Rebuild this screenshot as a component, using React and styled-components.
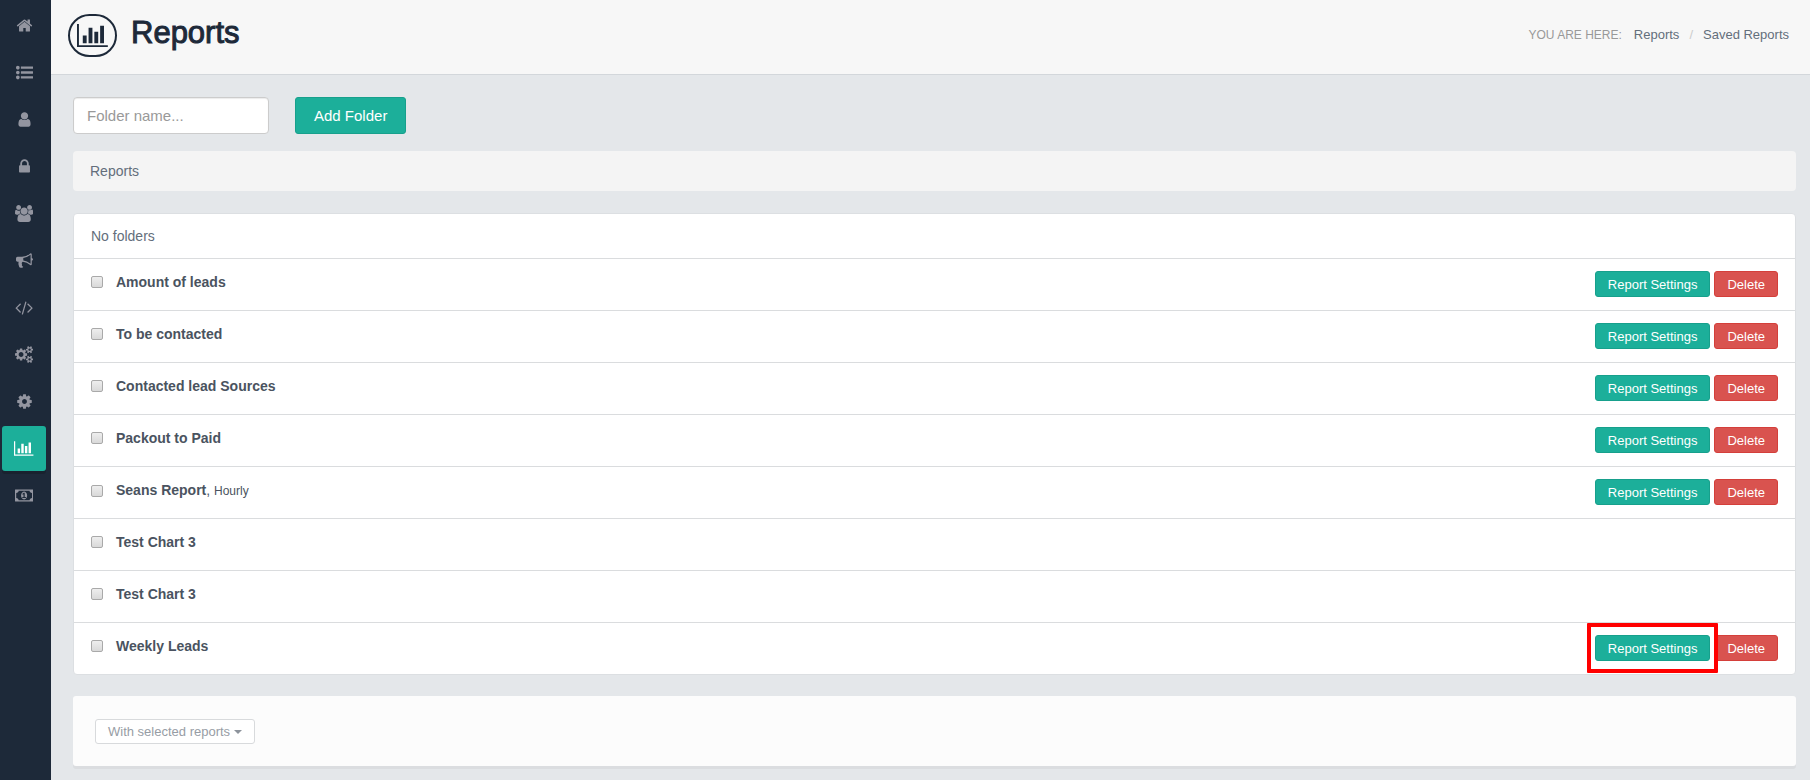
import { useState } from "react";
import styled, { createGlobalStyle } from "styled-components";

const GlobalStyle = createGlobalStyle`
  *, *::before, *::after {
    box-sizing: border-box;
  }
  body {
    margin: 0;
    background: #e4e7ea;
    color: #636e7b;
    font-family: "Liberation Sans", Arial, sans-serif;
    font-size: 14px;
    line-height: 20px;
  }
  button, input {
    font-family: inherit;
  }
  a {
    color: inherit;
    text-decoration: none;
  }
`;

const icons = {
  home: {
    width: 1792,
    path: "M1472 992v480q0 26-19 45t-45 19h-384v-384h-256v384h-384q-26 0-45-19t-19-45v-480q0-1 .5-3t.5-3l575-474 575 474q1 2 1 6zm223-69l-62 74q-8 9-21 11h-3q-13 0-21-7l-692-577-692 577q-12 8-24 7-13-2-21-11l-62-74q-8-10-7-23.5t11-21.5l719-599q32-26 76-26t76 26l244 204v-195q0-14 9-23t23-9h192q14 0 23 9t9 23v408l219 182q10 8 11 21.5t-7 23.5z",
  },
  list: {
    width: 1792,
    path: "M384 1408q0 80-56 136t-136 56-136-56-56-136 56-136 136-56 136 56 56 136zm0-512q0 80-56 136t-136 56-136-56-56-136 56-136 136-56 136 56 56 136zm1408 416v192q0 13-9.5 22.5t-22.5 9.5h-1216q-13 0-22.5-9.5t-9.5-22.5v-192q0-13 9.5-22.5t22.5-9.5h1216q13 0 22.5 9.5t9.5 22.5zm-1408-928q0 80-56 136t-136 56-136-56-56-136 56-136 136-56 136 56 56 136zm1408 416v192q0 13-9.5 22.5t-22.5 9.5h-1216q-13 0-22.5-9.5t-9.5-22.5v-192q0-13 9.5-22.5t22.5-9.5h1216q13 0 22.5 9.5t9.5 22.5zm0-512v192q0 13-9.5 22.5t-22.5 9.5h-1216q-13 0-22.5-9.5t-9.5-22.5v-192q0-13 9.5-22.5t22.5-9.5h1216q13 0 22.5 9.5t9.5 22.5z",
  },
  user: {
    width: 1792,
    path: "M1536 1399q0 109-62.5 187t-150.5 78h-854q-88 0-150.5-78t-62.5-187q0-85 8.5-160.5t31.5-152 58.5-131 94-89 134.5-34.5q131 128 313 128t313-128q76 0 134.5 34.5t94 89 58.5 131 31.5 152 8.5 160.5zm-256-887q0 159-112.5 271.5t-271.5 112.5-271.5-112.5-112.5-271.5 112.5-271.5 271.5-112.5 271.5 112.5 112.5 271.5z",
  },
  lock: {
    width: 1792,
    path: "M640 768h512v-192q0-106-75-181t-181-75-181 75-75 181v192zm832 96v576q0 40-28 68t-68 28h-960q-40 0-68-28t-28-68v-576q0-40 28-68t68-28h32v-192q0-184 132-316t316-132 316 132 132 316v192h32q40 0 68 28t28 68z",
  },
  users: {
    width: 1920,
    path: "M593 896q-162 5-265 128h-134q-82 0-138-40.5t-56-118.5q0-353 124-353 6 0 43.5 21t97.5 42.5 119 21.5q67 0 133-23-5 37-5 66 0 159 81 293zm1071 637q0 120-73 189.5t-194 69.5h-874q-121 0-194-69.5t-73-189.5q0-53 3.5-103.5t14-109 26.5-108.5 43-97.5 62-81 85.5-53.5 111.5-20q10 0 43 21.5t73 48 107 48 135 21.5 135-21.5 107-48 73-48 43-21.5q61 0 111.5 20t85.5 53.5 62 81 43 97.5 26.5 108.5 14 109 3.5 103.5zm-1024-1277q0 106-75 181t-181 75-181-75-75-181 75-181 181-75 181 75 75 181zm704 384q0 159-112.5 271.5t-271.5 112.5-271.5-112.5-112.5-271.5 112.5-271.5 271.5-112.5 271.5 112.5 112.5 271.5zm576 225q0 78-56 118.5t-138 40.5h-134q-103-123-265-128 81-134 81-293 0-29-5-66 66 23 133 23 59 0 119-21.5t97.5-42.5 43.5-21q124 0 124 353zm-128-609q0 106-75 181t-181 75-181-75-75-181 75-181 181-75 181 75 75 181z",
  },
  bullhorn: {
    width: 1792,
    path: "M1664 640q53 0 90.5 37.5t37.5 90.5-37.5 90.5-90.5 37.5v384q0 52-38 90t-90 38q-417-347-812-380-58 19-91 66t-31 100.5 40 92.5q-20 33-23 65.5t6 58 33.5 55 48 50 61.5 50.5q-29 58-111.5 83t-168.5 11.5-132-55.5q-7-23-29.5-87.5t-32-94.5-23-89-15-101 3.5-98.5 22-110.5h-122q-66 0-113-47t-47-113v-192q0-66 47-113t113-47h480q435 0 896-384 52 0 90 38t38 90v384zm-128 604v-954q-394 302-768 343v270q377 42 768 341z",
  },
  code: {
    width: 1920,
    path: "M617 1399l-50 50q-10 10-23 10t-23-10l-466-466q-10-10-10-23t10-23l466-466q10-10 23-10t23 10l50 50q10 10 10 23t-10 23l-393 393 393 393q10 10 10 23t-10 23zm591-1067l-373 1291q-4 13-15.5 19.5t-23.5 2.5l-62-17q-13-4-19.5-15.5t-2.5-24.5l373-1291q4-13 15.5-19.5t23.5-2.5l62 17q13 4 19.5 15.5t2.5 24.5zm657 651l-466 466q-10 10-23 10t-23-10l-50-50q-10-10-10-23t10-23l393-393-393-393q-10-10-10-23t10-23l50-50q10-10 23-10t23 10l466 466q10 10 10 23t-10 23z",
  },
  cogs: {
    width: 1920,
    path: "M896 896q0-106-75-181t-181-75-181 75-75 181 75 181 181 75 181-75 75-181zm768 512q0-52-38-90t-90-38-90 38-38 90q0 53 37.5 90.5t90.5 37.5 90.5-37.5 37.5-90.5zm0-1024q0-52-38-90t-90-38-90 38-38 90q0 53 37.5 90.5t90.5 37.5 90.5-37.5 37.5-90.5zm-384 421v185q0 10-7 19.5t-16 10.5l-155 24q-11 35-32 76 34 48 90 115 7 11 7 20 0 12-7 19-23 30-82.5 89.5t-78.5 59.5q-11 0-21-7l-115-90q-37 19-77 31-11 108-23 155-7 24-30 24h-186q-11 0-20-7.5t-10-17.5l-23-153q-34-10-75-31l-118 89q-7 7-20 7-11 0-21-8-144-133-144-160 0-9 7-19 10-14 41-53t47-61q-23-44-35-82l-152-24q-10-1-17-9.5t-7-19.5v-185q0-10 7-19.5t16-10.5l155-24q11-35 32-76-34-48-90-115-7-11-7-20 0-12 7-20 22-30 82-89t79-59q11 0 21 7l115 90q34-18 77-32 11-108 23-154 7-24 30-24h186q11 0 20 7.5t10 17.5l23 153q34 10 75 31l118-89q8-7 20-7 11 0 21 8 144 133 144 160 0 8-7 19-12 16-42 54t-45 60q23 48 34 82l152 23q10 2 17 10.5t7 19.5zm640 533v140q0 16-149 31-12 27-30 52 51 113 51 138 0 4-4 7-122 71-124 71-8 0-46-47t-52-68q-20 2-30 2t-30-2q-14 21-52 68t-46 47q-2 0-124-71-4-3-4-7 0-25 51-138-18-25-30-52-149-15-149-31v-140q0-16 149-31 13-29 30-52-51-113-51-138 0-4 4-7 4-2 35-20t59-34 30-16q8 0 46 46.5t52 67.5q20-2 30-2t30 2q51-71 92-112l6-2q4 0 124 70 4 3 4 7 0 25-51 138 17 23 30 52 149 15 149 31zm0-1024v140q0 16-149 31-12 27-30 52 51 113 51 138 0 4-4 7-122 71-124 71-8 0-46-47t-52-68q-20 2-30 2t-30-2q-14 21-52 68t-46 47q-2 0-124-71-4-3-4-7 0-25 51-138-18-25-30-52-149-15-149-31v-140q0-16 149-31 13-29 30-52-51-113-51-138 0-4 4-7 4-2 35-20t59-34 30-16q8 0 46 46.5t52 67.5q20-2 30-2t30 2q51-71 92-112l6-2q4 0 124 70 4 3 4 7 0 25-51 138 17 23 30 52 149 15 149 31z",
  },
  cog: {
    width: 1792,
    path: "M1152 896q0-106-75-181t-181-75-181 75-75 181 75 181 181 75 181-75 75-181zm512-109v222q0 12-8 23t-20 13l-185 28q-19 54-39 91 35 50 107 138 10 12 10 25t-9 23q-27 37-99 108t-94 71q-12 0-26-9l-138-108q-44 23-91 38-16 136-29 186-7 28-36 28h-222q-14 0-24.5-8.5t-11.5-21.5l-28-184q-49-16-90-37l-141 107q-10 9-25 9-14 0-25-11-126-114-165-168-7-10-7-23 0-12 8-23 15-21 51-66.5t54-70.5q-27-50-41-99l-183-27q-13-2-21-12.5t-8-23.5v-222q0-12 8-23t19-13l186-28q14-46 39-92-40-57-107-138-10-12-10-24 0-10 9-23 26-36 98.5-107.5t94.5-71.5q13 0 26 10l138 107q44-23 91-38 16-136 29-186 7-28 36-28h222q14 0 24.5 8.5t11.5 21.5l28 184q49 16 90 37l142-107q9-9 24-9 13 0 25 10 129 119 165 170 7 8 7 22 0 12-8 23-15 21-51 66.5t-54 70.5q26 50 41 98l183 28q13 2 21 12.5t8 23.5z",
  },
  chart: {
    width: 2048,
    path: "M640 896v512h-256v-512h256zm384-512v1024h-256v-1024h256zm1024 1152v128h-2048v-1536h128v1408h1920zm-640-896v768h-256v-768h256zm384-384v1152h-256v-1152h256z",
  },
  money: {
    width: 1920,
    path: "M768 1152h384v-96h-128v-448h-114l-148 137 77 80q42-37 55-57h2v288h-128v96zm512-256q0 70-21 142t-59.5 134-101.5 101-138 39-138-39-101.5-101-59.5-134-21-142 21-142 59.5-134 101.5-101 138-39 138 39 101.5 101 59.5 134 21 142zm512 256v-512q-106 0-181-75t-75-181h-1152q0 106-75 181t-181 75v512q106 0 181 75t75 181h1152q0-106 75-181t181-75zm128-832v1152q0 26-19 45t-45 19h-1792q-26 0-45-19t-19-45v-1152q0-26 19-45t45-19h1792q26 0 45 19t19 45z",
  },
};

const Icon = ({ name, size = 17 }) => {
  const { width, path } = icons[name];
  return (
    <svg
      height={size}
      width={(size * width) / 1792}
      viewBox={`0 0 ${width} 1792`}
      fill="currentColor"
      aria-hidden="true"
    >
      <path d={path} />
    </svg>
  );
};

const Page = styled.div`
  display: flex;
  min-height: 100vh;
`;

const Sidebar = styled.nav`
  flex: none;
  display: flex;
  flex-direction: column;
  gap: 2px;
  width: 51px;
  padding: 3px 5px 3px 2px;
  background: #1d2939;
`;

const SidebarLink = styled.a`
  display: flex;
  align-items: center;
  justify-content: center;
  height: 45px;
  border-radius: 3px;
  color: ${({ $active }) => ($active ? "#ffffff" : "#9395a0")};
  background: ${({ $active }) => ($active ? "#1caf9a" : "transparent")};
  box-shadow: ${({ $active }) =>
    $active ? "0 3px 0 rgba(12, 12, 12, 0.2)" : "none"};
`;

const Main = styled.main`
  flex: 1;
  min-width: 0;
`;

const Header = styled.header`
  display: flex;
  align-items: flex-start;
  justify-content: space-between;
  padding: 14px 21px 17px 17px;
  background: #f7f7f7;
  border-bottom: 1px solid #d3d7db;
`;

const Brand = styled.div`
  display: flex;
  gap: 14px;
  color: #1d2939;

  .badge {
    display: flex;
    align-items: center;
    justify-content: center;
    width: 49px;
    height: 43px;
    border: 2px solid #1d2939;
    border-radius: 22px;
  }
  h1 {
    margin: 0;
    font-size: 31px;
    font-weight: 400;
    line-height: 38px;
    -webkit-text-stroke: 1px #1d2939;
  }
`;

const Breadcrumb = styled.div`
  display: flex;
  font-size: 13px;
  line-height: 42px;

  .label {
    margin-right: 12px;
    font-size: 12px;
    color: #999999;
    text-transform: uppercase;
  }
  ol {
    display: flex;
    margin: 0;
    padding: 0;
    list-style: none;
  }
  li + li::before {
    content: "/";
    padding: 0 10px;
    color: #cccccc;
  }
`;

const Content = styled.div`
  padding: 22px 14px 14px 22px;
`;

const FolderForm = styled.form`
  display: flex;
  gap: 26px;
  margin-bottom: 17px;
`;

const TextInput = styled.input`
  width: 196px;
  height: 37px;
  padding: 0 13px;
  border: 1px solid #cccccc;
  border-radius: 4px;
  background: #ffffff;
  box-shadow: inset 0 1px 1px rgba(0, 0, 0, 0.08);
  color: #555555;
  font-size: 15px;

  &::placeholder {
    color: #999999;
    opacity: 1;
  }
`;

const buttonColors = {
  primary: { background: "#1caf9a", border: "#17a08c" },
  danger: { background: "#d9534f", border: "#d43f3a" },
};

const Button = styled.button`
  height: ${({ $large }) => ($large ? "37px" : "26px")};
  padding: ${({ $large }) => ($large ? "0 18px" : "0 12px")};
  border: 1px solid ${({ $variant }) => buttonColors[$variant].border};
  border-radius: 3px;
  background: ${({ $variant }) => buttonColors[$variant].background};
  color: #ffffff;
  font-size: ${({ $large }) => ($large ? "15px" : "13px")};
  white-space: nowrap;
  cursor: pointer;
`;

const PathBar = styled.div`
  margin-bottom: 22px;
  padding: 10px 17px;
  border-radius: 4px;
  background: #f4f4f4;
`;

const ReportPanel = styled.section`
  margin-bottom: 21px;
  border: 1px solid #dcdfe2;
  border-radius: 4px;
  background: #ffffff;

  .empty {
    margin: 0;
    padding: 12px 17px;
  }
  ul {
    margin: 0;
    padding: 0;
    list-style: none;
  }
`;

const ReportRow = styled.li`
  display: flex;
  align-items: flex-start;
  justify-content: space-between;
  min-height: 52px;
  padding: 12px 17px;
  border-top: 1px solid #dadcde;

  label {
    display: flex;
    align-items: center;
    gap: 13px;
    line-height: 22px;
    color: #4a5360;
  }
  small {
    font-size: 12px;
  }
  .actions {
    display: flex;
    gap: 4px;
  }
`;

const Checkbox = styled.input`
  appearance: none;
  width: 12px;
  height: 12px;
  margin: 0;
  border: 1px solid #a9a9a9;
  border-radius: 2px;
  background: linear-gradient(#eeeeee, #d9d9d9);

  &:checked {
    background: #1caf9a;
  }
`;

const Highlight = styled.div`
  position: relative;
  display: flex;

  &::after {
    content: "";
    position: absolute;
    inset: -12px -8px;
    border: 4px solid #ff0000;
    border-radius: 1px;
    pointer-events: none;
  }
`;

const BulkPanel = styled.section`
  padding: 23px 22px 22px;
  border-radius: 3px;
  background: #fcfcfc;
  box-shadow: 0 3px 0 rgba(12, 12, 12, 0.04);
`;

const DropdownButton = styled.button`
  display: flex;
  align-items: center;
  gap: 4px;
  height: 25px;
  padding: 0 12px;
  border: 1px solid #d8dadc;
  border-radius: 3px;
  background: #ffffff;
  color: #979da5;
  font-size: 13px;
  cursor: pointer;

  &::after {
    content: "";
    border: 4px solid transparent;
    border-top-color: #8d939c;
    border-bottom: 0;
  }
`;

const navItems = [
  { icon: "home", label: "Home" },
  { icon: "list", label: "List" },
  { icon: "user", label: "User" },
  { icon: "lock", label: "Security" },
  { icon: "users", label: "Groups" },
  { icon: "bullhorn", label: "Campaigns" },
  { icon: "code", label: "Code" },
  { icon: "cogs", label: "Configuration" },
  { icon: "cog", label: "Settings" },
  { icon: "chart", label: "Reports", active: true },
  { icon: "money", label: "Billing" },
];

const reports = [
  { id: 1, name: "Amount of leads", editable: true },
  { id: 2, name: "To be contacted", editable: true },
  { id: 3, name: "Contacted lead Sources", editable: true },
  { id: 4, name: "Packout to Paid", editable: true },
  { id: 5, name: "Seans Report", schedule: "Hourly", editable: true },
  { id: 6, name: "Test Chart 3" },
  { id: 7, name: "Test Chart 3" },
  { id: 8, name: "Weekly Leads", editable: true, highlighted: true },
];

const Report = ({ report }) => {
  const inputId = `report-${report.id}`;
  const settings = (
    <Button type="button" $variant="primary">
      Report Settings
    </Button>
  );
  return (
    <ReportRow>
      <label htmlFor={inputId}>
        <Checkbox type="checkbox" id={inputId} />
        <span>
          <strong>{report.name}</strong>
          {report.schedule && (
            <>
              , <small>{report.schedule}</small>
            </>
          )}
        </span>
      </label>
      {report.editable && (
        <div className="actions">
          {report.highlighted ? <Highlight>{settings}</Highlight> : settings}
          <Button type="button" $variant="danger">
            Delete
          </Button>
        </div>
      )}
    </ReportRow>
  );
};

const App = () => {
  const [folderName, setFolderName] = useState("");

  return (
    <Page>
      <GlobalStyle />
      <Sidebar>
        {navItems.map(({ icon, label, active }) => (
          <SidebarLink key={icon} href="#" aria-label={label} $active={active}>
            <Icon name={icon} />
          </SidebarLink>
        ))}
      </Sidebar>

      <Main>
        <Header>
          <Brand>
            <div className="badge">
              <Icon name="chart" size={27} />
            </div>
            <h1>Reports</h1>
          </Brand>
          <Breadcrumb>
            <span className="label">You are here:</span>
            <ol>
              <li>
                <a href="#">Reports</a>
              </li>
              <li>
                <a href="#">Saved Reports</a>
              </li>
            </ol>
          </Breadcrumb>
        </Header>

        <Content>
          <FolderForm onSubmit={(e) => e.preventDefault()}>
            <TextInput
              type="text"
              aria-label="Folder name"
              placeholder="Folder name..."
              value={folderName}
              onChange={(e) => setFolderName(e.target.value)}
            />
            <Button type="submit" $variant="primary" $large>
              Add Folder
            </Button>
          </FolderForm>

          <PathBar>
            <a href="#">Reports</a>
          </PathBar>

          <ReportPanel>
            <p className="empty">No folders</p>
            <ul>
              {reports.map((report) => (
                <Report key={report.id} report={report} />
              ))}
            </ul>
          </ReportPanel>

          <BulkPanel>
            <DropdownButton type="button" aria-haspopup="menu">
              With selected reports
            </DropdownButton>
          </BulkPanel>
        </Content>
      </Main>
    </Page>
  );
};

export default App;
